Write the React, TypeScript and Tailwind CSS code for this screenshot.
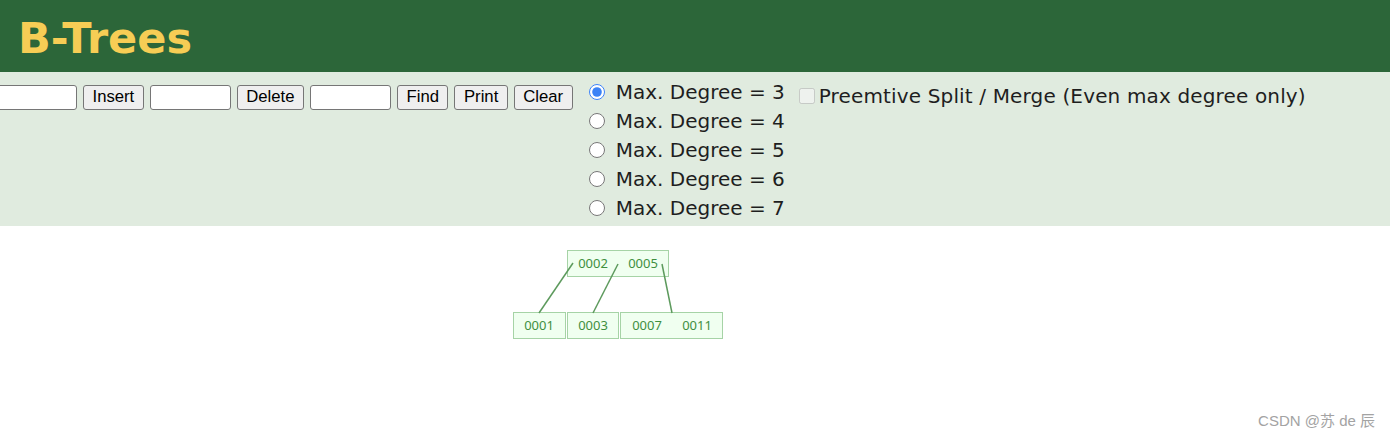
import React from "react";

const degrees = [3, 4, 5, 6, 7];

const verdana = "font-['DejaVu_Sans',Verdana,sans-serif]";
const arial = "font-['Liberation_Sans',Arial,sans-serif]";

function TextBox() {
  return (
    <input
      type="text"
      className={`h-[25px] w-[81px] shrink-0 rounded-[3px] border border-[#767676] bg-white px-1 text-[16.7px] ${arial}`}
    />
  );
}

function Btn({ label }: { label: string }) {
  return (
    <button
      className={`h-[25px] shrink-0 rounded-[3px] border border-[#767676] bg-[#efefef] px-[8.5px] text-[16.7px] leading-none text-black ${arial}`}
    >
      {label}
    </button>
  );
}

type TreeNode = { x: number; y: number; w: number; keys: { label: string; cx: number }[] };

const nodes: TreeNode[] = [
  { x: 567, y: 24, w: 101, keys: [{ label: "0002", cx: 593 }, { label: "0005", cx: 643 }] },
  { x: 513, y: 86, w: 52, keys: [{ label: "0001", cx: 539 }] },
  { x: 567, y: 86, w: 51, keys: [{ label: "0003", cx: 593 }] },
  { x: 620, y: 86, w: 102, keys: [{ label: "0007", cx: 647 }, { label: "0011", cx: 697 }] },
];

const edges = [
  [573, 37, 539, 87],
  [618, 38, 593, 87],
  [662, 38, 672, 87],
];

function TreeCanvas() {
  return (
    <svg width="1390" height="214" className="block">
      {nodes.map((n, i) => (
        <g key={i}>
          <rect x={n.x + 0.5} y={n.y + 0.5} width={n.w} height={26} fill="#f0fff0" stroke="#a6d3a6" strokeWidth="1" />
          {n.keys.map((k) => (
            <text
              key={k.label}
              x={k.cx}
              y={n.y + 17.5}
              textAnchor="middle"
              fontSize="13"
              fill="#3f8f3f"
              fontFamily="'Noto Sans', sans-serif"
            >
              {k.label}
            </text>
          ))}
        </g>
      ))}
      {edges.map(([x1, y1, x2, y2], i) => (
        <line key={i} x1={x1} y1={y1} x2={x2} y2={y2} stroke="#5d9a5d" strokeWidth="1.5" />
      ))}
    </svg>
  );
}

export default function App() {
  return (
    <div className={`relative h-[440px] w-[1390px] overflow-hidden bg-white ${verdana}`}>
      {/* title */}
      <div className="h-[72px] bg-[#2c6639] pl-[18px] pt-[4px]">
        <h1 className={`text-[43px] font-bold leading-[68px] text-[#f7cd55] ${verdana}`}>B-Trees</h1>
      </div>

      {/* controls */}
      <div className="flex h-[154px] items-start bg-[#e0ebdf] pt-[5px]">
        <div className="-ml-1 mt-[8px] flex items-center gap-[6px]">
          <TextBox />
          <Btn label="Insert" />
          <TextBox />
          <Btn label="Delete" />
          <TextBox />
          <Btn label="Find" />
          <Btn label="Print" />
          <Btn label="Clear" />
        </div>

        <div className="ml-[16px] flex flex-col">
          {degrees.map((d) => (
            <label key={d} className="flex h-[29px] items-center text-[20px] text-[#1e1e1e]">
              <input
                type="radio"
                name="degree"
                defaultChecked={d === 3}
                className="m-0 h-4 w-4 accent-[#3b82f6]"
              />
              <span className="ml-[11px]">Max. Degree = {d}</span>
            </label>
          ))}
        </div>

        <label className="ml-[14px] mt-[4px] flex h-[29px] items-center text-[20px] tracking-[0.15px] text-[#1e1e1e]">
          <input type="checkbox" disabled className="m-0 h-4 w-4" />
          <span className="ml-[4px]">Preemtive Split / Merge (Even max degree only)</span>
        </label>
      </div>

      <TreeCanvas />

      <div className="absolute bottom-[8px] right-[15px] font-['Liberation_Sans','Noto_Sans_CJK_SC',sans-serif] text-[15px] text-[#a3a3a3]">
        CSDN @苏 de 辰
      </div>
    </div>
  );
}
